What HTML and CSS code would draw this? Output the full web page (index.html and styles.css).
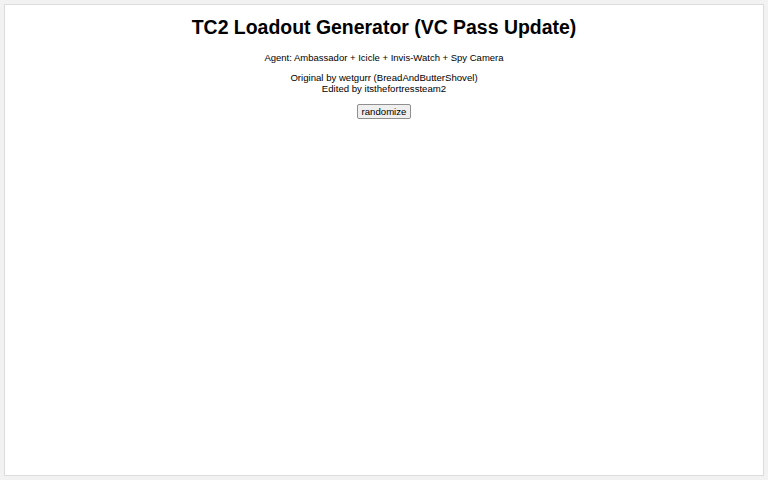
FILE: index.html
```html
<!DOCTYPE html>
<html>
<head>
<meta charset="utf-8">
<link rel="stylesheet" href="styles.css">
</head>
<body>
<div class="page">
  <h1 class="title">TC2 Loadout Generator (VC Pass Update)</h1>
  <p class="loadout">Agent: Ambassador + Icicle + Invis-Watch + Spy Camera</p>
  <p class="credits">Original by wetgurr (BreadAndButterShovel)<br>Edited by itsthefortressteam2</p>
  <button class="btn">randomize</button>
</div>
</body>
</html>
```
FILE: styles.css
```css
html, body { margin: 0; padding: 0; }
body {
  background: #f2f2f2;
  padding: 4px;
  font-family: "Liberation Sans", Arial, sans-serif;
  color: #000;
}
.page {
  background: #fff;
  border: 1px solid #dcdcdc;
  box-sizing: border-box;
  height: 472px;
  display: flex;
  flex-direction: column;
  align-items: center;
  text-align: center;
  padding-top: 12.3px;
}
.title {
  margin: 0;
  font-size: 19.45px;
  font-weight: bold;
  line-height: 21.6px;
}
.loadout {
  margin: 12.8px 0 0;
  font-size: 9.5px;
  line-height: 11px;
}
.credits {
  margin: 9.6px 0 0;
  font-size: 9.6px;
  line-height: 11px;
}
.btn {
  margin-top: 9.6px;
  font-family: "Liberation Sans", Arial, sans-serif;
  font-size: 9.6px;
  line-height: 11px;
  padding: 1px 4px;
  background: #efefef;
  border: 1px solid #8f8f8f;
  border-radius: 2px;
  color: #000;
}
```
